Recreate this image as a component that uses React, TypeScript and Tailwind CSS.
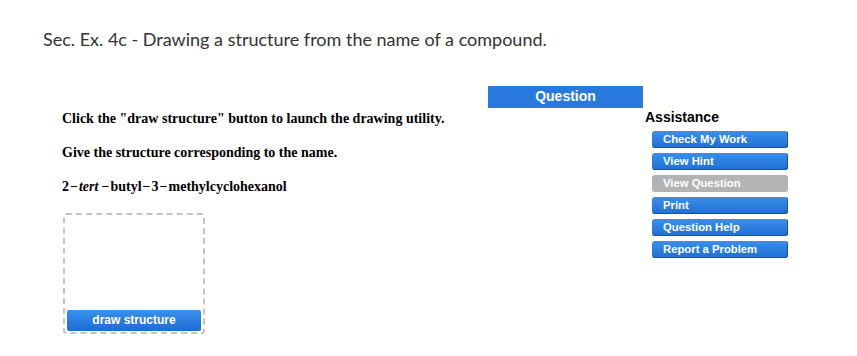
import React from 'react';

const tools = ['Check My Work', 'View Hint', 'View Question', 'Print', 'Question Help', 'Report a Problem'];

function ToolButton({ label }: { label: string }) {
  const disabled = label === 'View Question';
  return (
    <div
      className={
        'h-[17px] w-[136px] rounded-[3px] pl-[11px] text-[11.3px] font-bold leading-[17px] text-white ' +
        (disabled
          ? 'bg-[#b3b3b3]'
          : 'bg-gradient-to-b from-[#3b8fe8] to-[#1f6fd6] shadow-[inset_-1px_-1px_0_#1b4f96]')
      }
    >
      {label}
    </div>
  );
}

const Minus = () => <span className="mx-[1px]">−</span>;

export default function App() {
  return (
    <div className="h-[356px] w-[857px] overflow-hidden bg-white font-['Liberation_Sans',Arial,sans-serif]">
      <h1 className="pl-[43px] pt-[27px] font-['Lato',sans-serif] text-[18px] leading-[24px] text-[#333]">
        Sec. Ex. 4c - Drawing a structure from the name of a compound.
      </h1>

      <div className="mt-[35px] flex">
        {/* question panel */}
        <div className="w-[643px]">
          <div className="flex justify-end">
            <div className="h-[22px] w-[155px] bg-[#2779dd] text-center text-[14px] font-bold leading-[20px] text-white">
              Question
            </div>
          </div>
          <div className="pl-[62px] font-['Liberation_Serif',serif] text-[14px] font-bold text-black">
            <p className="mt-[2px] leading-[18px]">Click the "draw structure" button to launch the drawing utility.</p>
            <p className="mt-[16px] leading-[18px]">Give the structure corresponding to the name.</p>
            <p className="mt-[16px] leading-[18px]">
              2<Minus />
              <i className="mr-[2px]">tert</i>
              <Minus />butyl<Minus />3<Minus />methylcyclohexanol
            </p>
            <div className="ml-[1px] mt-[17px] flex h-[121px] w-[142px] flex-col justify-end rounded-[3px] border-2 border-dashed border-[#c4c4c4] px-[2px] pb-[1px]">
              <div className="h-[21px] rounded-[2px] bg-gradient-to-b from-[#3a91ec] to-[#1d6bd6] text-center font-['Liberation_Sans',Arial,sans-serif] text-[12px] font-bold leading-[21px] text-white">
                draw structure
              </div>
            </div>
          </div>
        </div>

        {/* assistance sidebar */}
        <div className="pl-[2px] pt-[23px]">
          <div className="text-[14px] font-bold leading-[16px] text-black">Assistance</div>
          <div className="mt-[6px] flex flex-col gap-[5px] pl-[7px]">
            {tools.map((t) => (
              <ToolButton key={t} label={t} />
            ))}
          </div>
        </div>
      </div>
    </div>
  );
}
